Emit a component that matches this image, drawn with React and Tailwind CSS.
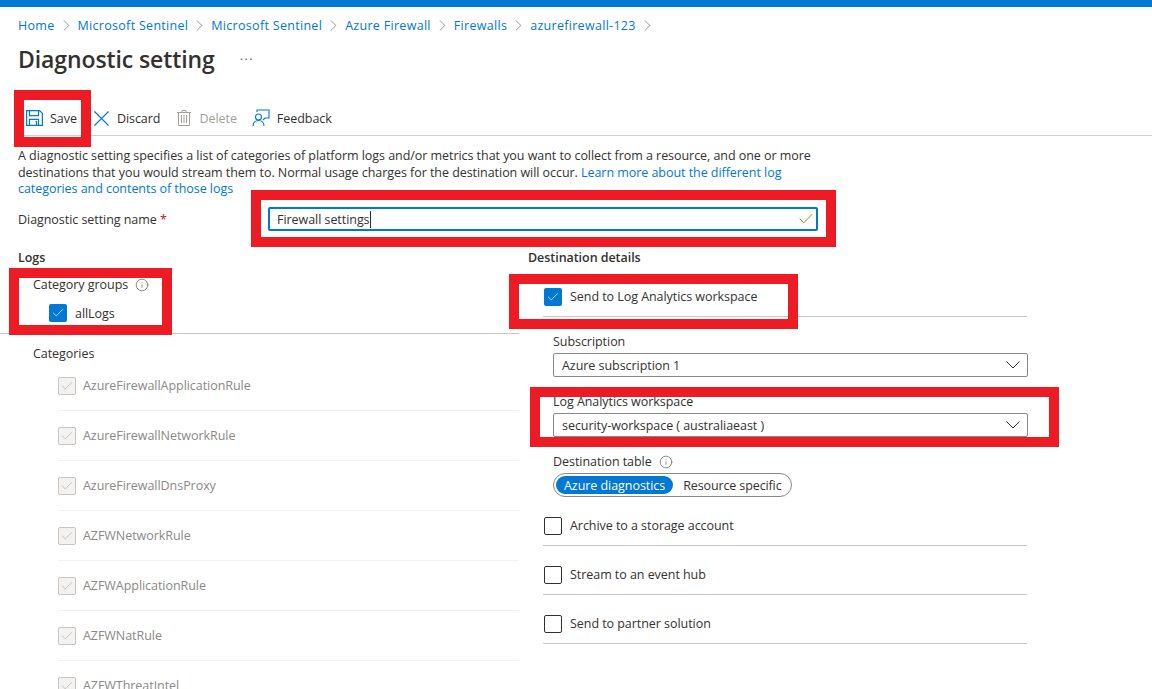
import React from 'react';
import { ChevronRight, X, Check, Info } from 'lucide-react';

const crumbs = ['Home', 'Microsoft Sentinel', 'Microsoft Sentinel', 'Azure Firewall', 'Firewalls', 'azurefirewall-123'];
const categories = [
  'AzureFirewallApplicationRule',
  'AzureFirewallNetworkRule',
  'AzureFirewallDnsProxy',
  'AZFWNetworkRule',
  'AZFWApplicationRule',
  'AZFWNatRule',
  'AZFWThreatIntel',
];

const CheckBox = ({ checked, disabled }) => {
  if (disabled) {
    return (
      <span className="flex h-[18px] w-[18px] shrink-0 items-center justify-center rounded-[2px] border border-[#c8c6c4] bg-[#f3f2f1]">
        <Check className="h-[14px] w-[14px] text-[#a19f9d]" strokeWidth={1} />
      </span>
    );
  }
  if (checked) {
    return (
      <span className="flex h-[18px] w-[18px] shrink-0 items-center justify-center rounded-[2px] bg-[#0078d4]">
        <Check className="h-[14px] w-[14px] text-white" strokeWidth={1.2} />
      </span>
    );
  }
  return <span className="h-[18px] w-[18px] shrink-0 rounded-[2px] border border-[#323130]" />;
};

const InfoIcon = () => <Info className="h-[14px] w-[14px] text-[#605e5c]" strokeWidth={1.2} />;

const SaveIcon = () => (
  <svg width="17" height="16" viewBox="0 0 17 16" fill="none" stroke="#0078d4" strokeWidth="1.2">
    <path d="M.6.6h13l2.800 2.800v12H.6z" />
    <path d="M3.500.6v5h9v-5" />
    <path d="M3.500 15.400v-6h9v6" />
    <path d="M9.500 11.500h1v4" />
  </svg>
);

const TrashIcon = () => (
  <svg width="14" height="16" viewBox="0 0 14 16" fill="none" stroke="#a19f9d" strokeWidth="1">
    <path d="M0 2.500h14" />
    <path d="M5 2.500v-2h4v2" />
    <path d="M1.500 2.500v13h11v-13" />
    <path d="M4.500 5v8M7 5v8M9.500 5v8" />
  </svg>
);

const FeedbackIcon = () => (
  <svg width="18" height="18" viewBox="0 0 18 18" fill="none" stroke="#0078d4" strokeWidth="1.1">
    <circle cx="6.500" cy="8" r="3" />
    <path d="M1 17c0-3.500 2.500-5.500 5.500-5.500S12 13.500 12 17" />
    <path d="M5 3V1h12v8h-4l-2 2" />
  </svg>
);

const DownIcon = () => (
  <svg width="14" height="8" viewBox="0 0 14 8" fill="none" stroke="#323130" strokeWidth="1">
    <path d="M.5.500 7 7l6.500-6.500" />
  </svg>
);

const SelectBox = ({ value }) => (
  <div className="flex h-[24px] w-[475px] items-center justify-between rounded-[2px] border border-[#8a8886] pl-2 pr-[7px]">
    <span>{value}</span>
    <DownIcon />
  </div>
);

const Frame = ({ className }) => <div className={`pointer-events-none absolute border-[10px] border-[#ed1c24] ${className}`} />;

const App = () => {
  return (
    <div className="relative h-[689px] w-[1152px] overflow-hidden bg-white text-[12.5px] leading-[17px] text-[#323130] [font-family:'Open_Sans','Noto_Sans',sans-serif] tracking-[-0.05px]">
      <div className="h-[7px] bg-[#0078d4]" />

      <nav className="ml-[18px] mt-[10px] flex h-[17px] items-center text-[#0078d4] tracking-[0.3px]">
        {crumbs.map((c, i) => (
          <React.Fragment key={i}>
            <span>{c}</span>
            <ChevronRight className="mx-[2px] h-[19px] w-[19px] text-[#605e5c]" strokeWidth={0.8} />
          </React.Fragment>
        ))}
      </nav>

      <div className="ml-[18px] mt-[8px] flex h-[34px] items-center">
        <h1 className="text-[23px] font-semibold leading-[34px] tracking-[-0.1px]">Diagnostic setting</h1>
        <span className="ml-[25px] text-[#605e5c] tracking-[1.5px]">···</span>
      </div>

      <div className="ml-[24px] mt-[25px] flex h-[35px] items-center border-b border-[#d2d0ce] pl-[2px]">
        <SaveIcon />
        <span className="ml-[7px]">Save</span>
        <X className="ml-[11px] h-[27px] w-[27px] text-[#0078d4]" strokeWidth={1} />
        <span className="ml-[2px]">Discard</span>
        <span className="ml-[17px]"><TrashIcon /></span>
        <span className="ml-[8px] text-[#a19f9d]">Delete</span>
        <span className="ml-[15px]"><FeedbackIcon /></span>
        <span className="ml-[7px]">Feedback</span>
      </div>

      <p className="ml-[18px] mt-[12px] w-[800px] leading-[16.5px]">
        A diagnostic setting specifies a list of categories of platform logs and/or metrics that you want to collect from a resource, and one or more destinations that you would stream them to. Normal usage charges for the destination will occur.{' '}
        <span className="text-[#0078d4]">Learn more about the different log categories and contents of those logs</span>
      </p>

      <div className="ml-[18px] mt-[9.5px] flex h-[24px] items-center">
        <span className="w-[250px]">
          Diagnostic setting name <span className="text-[#a4262c]">*</span>
        </span>
        <div className="flex h-[24px] w-[550px] items-center justify-between rounded-[2px] border-2 border-[#0078d4] pl-[7px] pr-[1px]">
          <span className="border-r border-[#323130]">Firewall settings</span>
          <Check className="h-[18px] w-[18px] text-[#57a300]" strokeWidth={1.3} />
        </div>
      </div>

      <div className="mt-[18px] flex">
        <div className="w-[528px] shrink-0">
          <h2 className="ml-[18px] font-semibold">Logs</h2>
          <div className="ml-[33px] mt-[10px] flex items-center gap-[7px]">
            Category groups <InfoIcon />
          </div>
          <div className="ml-[49px] mt-[11px] flex items-center gap-[8px]">
            <CheckBox checked /> allLogs
          </div>
          <div className="mt-[11px] w-[519px] border-t border-[#c8c6c4]" />
          <div className="ml-[33px] mt-[11px]">Categories</div>
          <div className="mt-[-1px] w-[519px] pl-[58px]">
            {categories.map((c) => (
              <div key={c} className="flex h-[50px] items-center gap-[7px] border-b border-[#f3f2f1] text-[#8a8886]">
                <CheckBox disabled /> {c}
              </div>
            ))}
          </div>
        </div>

        <div className="shrink-0">
          <h2 className="font-semibold">Destination details</h2>
          <div className="ml-[15px] w-[484px]">
            <div className="mt-[21px] flex h-[30px] items-start gap-[8px] border-b border-[#c8c6c4] pl-[1px] pt-[1px]">
              <CheckBox checked /> Send to Log Analytics workspace
            </div>
            <div className="ml-[10px] mt-[16px]">Subscription</div>
            <div className="ml-[10px] mt-[3px]"><SelectBox value="Azure subscription 1" /></div>
            <div className="ml-[10px] mt-[16px]">Log Analytics workspace</div>
            <div className="ml-[10px] mt-[3px]"><SelectBox value="security-workspace ( australiaeast )" /></div>
            <div className="ml-[10px] mt-[16px] flex items-center gap-[7px]">
              Destination table <InfoIcon />
            </div>
            <div className="ml-[10px] mt-[3px] flex h-[24px] w-[239px] items-center rounded-full border border-[#8a8886] px-[2px]">
              <span className="flex h-[18px] items-center rounded-full bg-[#0078d4] px-[8px] text-white">Azure diagnostics</span>
              <span className="ml-[10px] tracking-[-0.12px]">Resource specific</span>
            </div>
            <div className="mt-[20px] flex h-[29px] items-start gap-[8px] border-b border-[#c8c6c4] pl-[1px]">
              <CheckBox /> Archive to a storage account
            </div>
            <div className="mt-[20px] flex h-[29px] items-start gap-[8px] border-b border-[#c8c6c4] pl-[1px]">
              <CheckBox /> Stream to an event hub
            </div>
            <div className="mt-[20px] flex h-[29px] items-start gap-[8px] border-b border-[#c8c6c4] pl-[1px]">
              <CheckBox /> Send to partner solution
            </div>
          </div>
        </div>
      </div>

      <Frame className="left-[14px] top-[90px] h-[57px] w-[77px]" />
      <Frame className="left-[251px] top-[190px] h-[57px] w-[585px]" />
      <Frame className="left-[9px] top-[268px] h-[67px] w-[163px]" />
      <Frame className="left-[509px] top-[274px] h-[55px] w-[289px]" />
      <Frame className="left-[530px] top-[387px] h-[60px] w-[529px]" />
    </div>
  );
};

export default App;
